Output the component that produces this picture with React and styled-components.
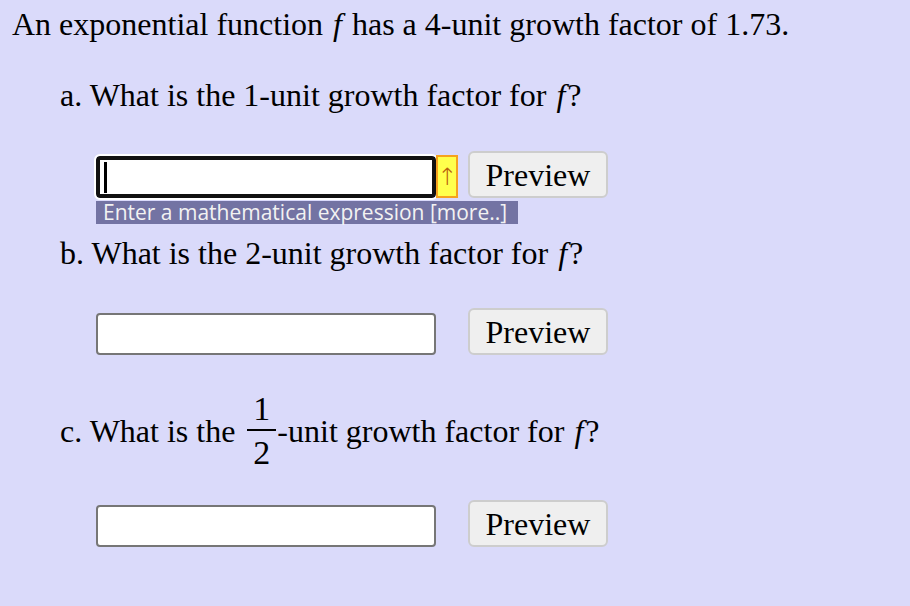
import React from "react";
import styled, { createGlobalStyle } from "styled-components";

const GlobalStyle = createGlobalStyle`
    html, body {
        margin: 0;
        padding: 0;
        background: #dadafa;
    }
    body {
        font-family: "Liberation Serif", "Times New Roman", serif;
        color: #000;
    }
`;

const Page = styled.div`
    width: 910px;
    height: 606px;
    padding: 6px 0 0 12px;
    box-sizing: border-box;
    overflow: hidden;
`;

const Intro = styled.div`
    font-size: 32px;
    line-height: 36px;
    white-space: nowrap;
`;

const Part = styled.div`
    margin-left: 48px;
    margin-top: ${(p) => p.$top}px;
    font-size: 32px;
    line-height: 36px;
    display: flex;
    align-items: center;
    white-space: pre;
`;

const Var = styled.i`
    font-style: italic;
    margin: 0 2px;
`;

const Frac = styled.span`
    display: inline-flex;
    flex-direction: column;
    align-items: stretch;
    margin: 0 1px 0 12px;
    font-size: 34px;
    line-height: 30px;
    text-align: center;
`;

const Num = styled.span`
    padding: 0 6px 5px;
    border-bottom: 2px solid #000;
`;

const Den = styled.span`
    padding-top: 7px;
`;

const AnswerRow = styled.div`
    margin-left: 84px;
    margin-top: ${(p) => p.$top}px;
    display: flex;
    align-items: flex-end;
`;

const Field = styled.div`
    position: relative;
    display: flex;
    align-items: flex-end;
`;

const Input = styled.div`
    width: 340px;
    height: 42px;
    box-sizing: border-box;
    background: #fff;
    border: ${(p) => (p.$active ? "4px solid #111" : "2px solid #767676")};
    border-radius: 4px;
    outline: ${(p) => (p.$active ? "2px solid #fff" : "none")};
    display: flex;
    align-items: center;
    padding-left: 4px;
`;

const Caret = styled.span`
    width: 3px;
    height: 31px;
    background: #000;
`;

const Arrow = styled.div`
    width: 22px;
    height: 43px;
    box-sizing: border-box;
    background: #ffff4c;
    border: 2px solid #f6a21e;
    color: #b8600e;
    font-family: "DejaVu Sans", sans-serif;
    font-size: 24px;
    font-weight: 300;
    display: flex;
    align-items: center;
    justify-content: center;
`;

const Spacer = styled.div`
    width: ${(p) => p.$w}px;
`;

const PreviewButton = styled.button`
    width: 140px;
    height: 47px;
    box-sizing: border-box;
    background: #efefef;
    border: 2px solid #cdcdcd;
    border-radius: 6px;
    font-family: "Liberation Serif", "Times New Roman", serif;
    font-size: 32px;
    line-height: 40px;
    color: #000;
    padding: 0;
`;

const Hint = styled.div`
    position: absolute;
    left: 0;
    top: 100%;
    margin-top: 3px;
    width: 422px;
    height: 23px;
    background: #7373a3;
    color: #f2f2f2;
    font-family: "Open Sans", "Noto Sans", sans-serif;
    font-size: 21px;
    line-height: 22px;
    padding-left: 7px;
    box-sizing: border-box;
    white-space: nowrap;
`;

export default function App() {
    return (
        <>
            <GlobalStyle />
            <Page>
                <Intro>
                    An exponential function <Var>f</Var> has a 4-unit growth factor of 1.73.
                </Intro>

                <Part $top={35}>
                    a. What is the 1-unit growth factor for <Var>f</Var>?
                </Part>
                <AnswerRow $top={38}>
                    <Field>
                        <Input $active>
                            <Caret />
                        </Input>
                        <Arrow>↑</Arrow>
                        <Hint>Enter a mathematical expression [more..]</Hint>
                    </Field>
                    <Spacer $w={10} />
                    <PreviewButton>Preview</PreviewButton>
                </AnswerRow>

                <Part $top={37}>
                    b. What is the 2-unit growth factor for <Var>f</Var>?
                </Part>
                <AnswerRow $top={37}>
                    <Field>
                        <Input />
                    </Field>
                    <Spacer $w={32} />
                    <PreviewButton>Preview</PreviewButton>
                </AnswerRow>

                <Part $top={39}>
                    c. What is the
                    <Frac>
                        <Num>1</Num>
                        <Den>2</Den>
                    </Frac>
                    -unit growth factor for <Var>f</Var>?
                </Part>
                <AnswerRow $top={32}>
                    <Field>
                        <Input />
                    </Field>
                    <Spacer $w={32} />
                    <PreviewButton>Preview</PreviewButton>
                </AnswerRow>
            </Page>
        </>
    );
}
